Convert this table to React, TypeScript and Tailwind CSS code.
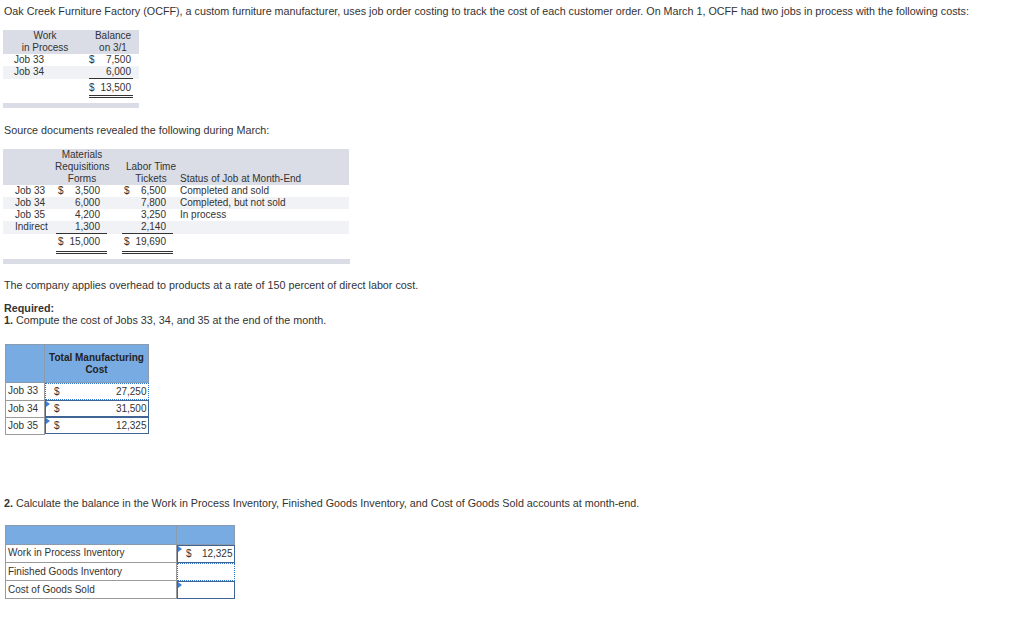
import React from 'react';

const HEAD = 'bg-[#dadde6]';
const ALT = 'bg-[#f1f2f5]';

function Flag() {
  return (
    <span className="absolute left-0 top-0 h-0 w-0 border-solid border-t-[3px] border-b-[3px] border-l-[4px] border-r-0 border-t-transparent border-b-transparent border-l-[#3c7fd4]" />
  );
}

function InputCell({ value, focus, flag, h }: { value?: string; focus?: boolean; flag?: boolean; h: string }) {
  const box = focus
    ? 'border border-dotted border-[#2f74cf]'
    : 'border border-[#3f6596]';
  return (
    <td className="p-0">
      <div className={`relative ${h} flex items-center justify-between pl-[8px] pr-[1px] ${box}`}>
        {value ? (
          <>
            <span>$</span>
            <span>{value}</span>
          </>
        ) : null}
        {flag && <Flag />}
      </div>
    </td>
  );
}

function BalanceTable() {
  const rows = [
    { job: 'Job 33', amt: '7,500', dollar: true, bg: 'bg-white' },
    { job: 'Job 34', amt: '6,000', dollar: false, bg: ALT },
  ];
  return (
    <div className="ml-[-1px] mt-[12px] w-[136px] text-[10px] leading-[12px] text-[#333]">
      <div className={`flex ${HEAD}`}>
        <div className="w-[84px] text-center">Work<br />in Process</div>
        <div className="w-[52px] text-center">Balance<br />on 3/1</div>
      </div>
      {rows.map((r, i) => (
        <div key={r.job} className={`flex ${r.bg}`}>
          <div className="w-[84px] pl-[11px]">{r.job}</div>
          <div className="w-[52px]">
            <div className={`ml-[2px] w-[44px] pr-[2px] flex justify-between ${i === 1 ? 'border-b border-[#333]' : ''}`}>
              <span>{r.dollar ? '$' : ''}</span>
              <span>{r.amt}</span>
            </div>
          </div>
        </div>
      ))}
      <div className="flex">
        <div className="w-[84px]" />
        <div className="w-[52px]">
          <div className="ml-[2px] w-[44px] pr-[2px] pt-[3px] pb-[1px] flex justify-between border-b-[3px] border-double border-[#333]">
            <span>$</span>
            <span>13,500</span>
          </div>
        </div>
      </div>
      <div className={`mt-[5px] h-[5px] ${HEAD}`} />
    </div>
  );
}

function SourceTable() {
  const rows = [
    { job: 'Job 33', m: '3,500', l: '6,500', s: 'Completed and sold', d: true, bg: 'bg-white' },
    { job: 'Job 34', m: '6,000', l: '7,800', s: 'Completed, but not sold', d: false, bg: ALT },
    { job: 'Job 35', m: '4,200', l: '3,250', s: 'In process', d: false, bg: 'bg-white' },
    { job: 'Indirect', m: '1,300', l: '2,140', s: '', d: false, bg: ALT },
  ];
  return (
    <div className="ml-[-1px] mt-[12px] w-[346px] text-[10px] leading-[12px] text-[#333]">
      <div className={`flex ${HEAD}`}>
        <div className="w-[52px]" />
        <div className="w-[54px] text-center">Materials<br />Requisitions<br />Forms</div>
        <div className="w-[71px] flex flex-col justify-end">
          <div className="ml-[13px] w-[58px] text-center">Labor Time<br />Tickets</div>
        </div>
        <div className="flex-1 flex flex-col justify-end">Status of Job at Month-End</div>
      </div>
      {rows.map((r, i) => (
        <div key={r.job} className={`flex ${r.bg}`}>
          <div className="w-[52px] pl-[12px]">{r.job}</div>
          <div className="w-[54px]">
            <div className={`ml-[1px] w-[51px] pl-[2px] pr-[7px] flex justify-between ${i === 3 ? 'border-b border-[#333]' : ''}`}>
              <span>{r.d ? '$' : ''}</span>
              <span>{r.m}</span>
            </div>
          </div>
          <div className="w-[71px]">
            <div className={`ml-[13px] w-[51px] pl-[2px] pr-[7px] flex justify-between ${i === 3 ? 'border-b border-[#333]' : ''}`}>
              <span>{r.d ? '$' : ''}</span>
              <span>{r.l}</span>
            </div>
          </div>
          <div className="flex-1">{r.s}</div>
        </div>
      ))}
      <div className="flex">
        <div className="w-[52px]" />
        <div className="w-[54px]">
          <div className="ml-[1px] w-[51px] pl-[2px] pr-[7px] pt-[2px] pb-[3px] flex justify-between border-b-[3px] border-double border-[#333]">
            <span>$</span>
            <span>15,000</span>
          </div>
        </div>
        <div className="w-[71px]">
          <div className="ml-[13px] w-[51px] pl-[2px] pr-[7px] pt-[2px] pb-[3px] flex justify-between border-b-[3px] border-double border-[#333]">
            <span>$</span>
            <span>19,690</span>
          </div>
        </div>
      </div>
      <div className={`mt-[5px] h-[5px] w-[347px] ${HEAD}`} />
    </div>
  );
}

function CostTable() {
  const rows = [
    { job: 'Job 33', v: '27,250', focus: true, flag: false },
    { job: 'Job 34', v: '31,500', focus: false, flag: true },
    { job: 'Job 35', v: '12,325', focus: false, flag: true },
  ];
  return (
    <table className="ml-[1px] mt-[18px] w-[143px] table-fixed border-collapse text-[10px] leading-[12px] text-[#333]">
      <colgroup>
        <col className="w-[39px]" />
        <col className="w-[104px]" />
      </colgroup>
      <thead>
        <tr className="h-[38px] bg-[#79abe3]">
          <th className="border border-[#8a9bb0]" />
          <th className="border border-[#8a9bb0] font-bold text-[#222] text-center">Total Manufacturing<br />Cost</th>
        </tr>
      </thead>
      <tbody>
        {rows.map((r) => (
          <tr key={r.job}>
            <td className="h-[17px] border border-[#9a9a9a] pl-[2px]">{r.job}</td>
            <InputCell value={r.v} focus={r.focus} flag={r.flag} h="h-[17px]" />
          </tr>
        ))}
      </tbody>
    </table>
  );
}

function BalanceInputTable() {
  const rows = [
    { label: 'Work in Process Inventory', v: '12,325', focus: false, flag: true },
    { label: 'Finished Goods Inventory', v: '', focus: true, flag: false },
    { label: 'Cost of Goods Sold', v: '', focus: false, flag: true },
  ];
  return (
    <table className="ml-[1px] mt-[15px] w-[229px] table-fixed border-collapse text-[10px] leading-[12px] text-[#333]">
      <colgroup>
        <col className="w-[171px]" />
        <col className="w-[58px]" />
      </colgroup>
      <thead>
        <tr className="h-[19px] bg-[#79abe3]">
          <th className="border border-[#8a9bb0]" />
          <th className="border border-[#8a9bb0]" />
        </tr>
      </thead>
      <tbody>
        {rows.map((r) => (
          <tr key={r.label}>
            <td className="h-[18px] border border-[#9a9a9a] pl-[2px]">{r.label}</td>
            <InputCell value={r.v} focus={r.focus} flag={r.flag} h="h-[18px]" />
          </tr>
        ))}
      </tbody>
    </table>
  );
}

export default function App() {
  return (
    <div className="w-[1024px] h-[628px] overflow-hidden bg-white pl-[4px] pt-[4px] font-['Liberation_Sans',Arial,sans-serif] text-[#333]">
      <p className="text-[10.75px] leading-[14px] whitespace-nowrap">
        Oak Creek Furniture Factory (OCFF), a custom furniture manufacturer, uses job order costing to track the cost of each customer order. On March 1, OCFF had two jobs in process with the following costs:
      </p>

      <BalanceTable />

      <p className="mt-[15px] text-[10.75px] leading-[14px]">Source documents revealed the following during March:</p>

      <SourceTable />

      <p className="mt-[14px] text-[10.75px] leading-[14px]">
        The company applies overhead to products at a rate of 150 percent of direct labor cost.
      </p>

      <div className="mt-[10px] text-[10.75px] leading-[12px]">
        <div className="font-bold">Required:</div>
        <div><span className="font-bold">1.</span> Compute the cost of Jobs 33, 34, and 35 at the end of the month.</div>
      </div>

      <CostTable />

      <p className="mt-[61px] text-[10.75px] leading-[14px]">
        <span className="font-bold">2.</span> Calculate the balance in the Work in Process Inventory, Finished Goods Inventory, and Cost of Goods Sold accounts at month-end.
      </p>

      <BalanceInputTable />
    </div>
  );
}
